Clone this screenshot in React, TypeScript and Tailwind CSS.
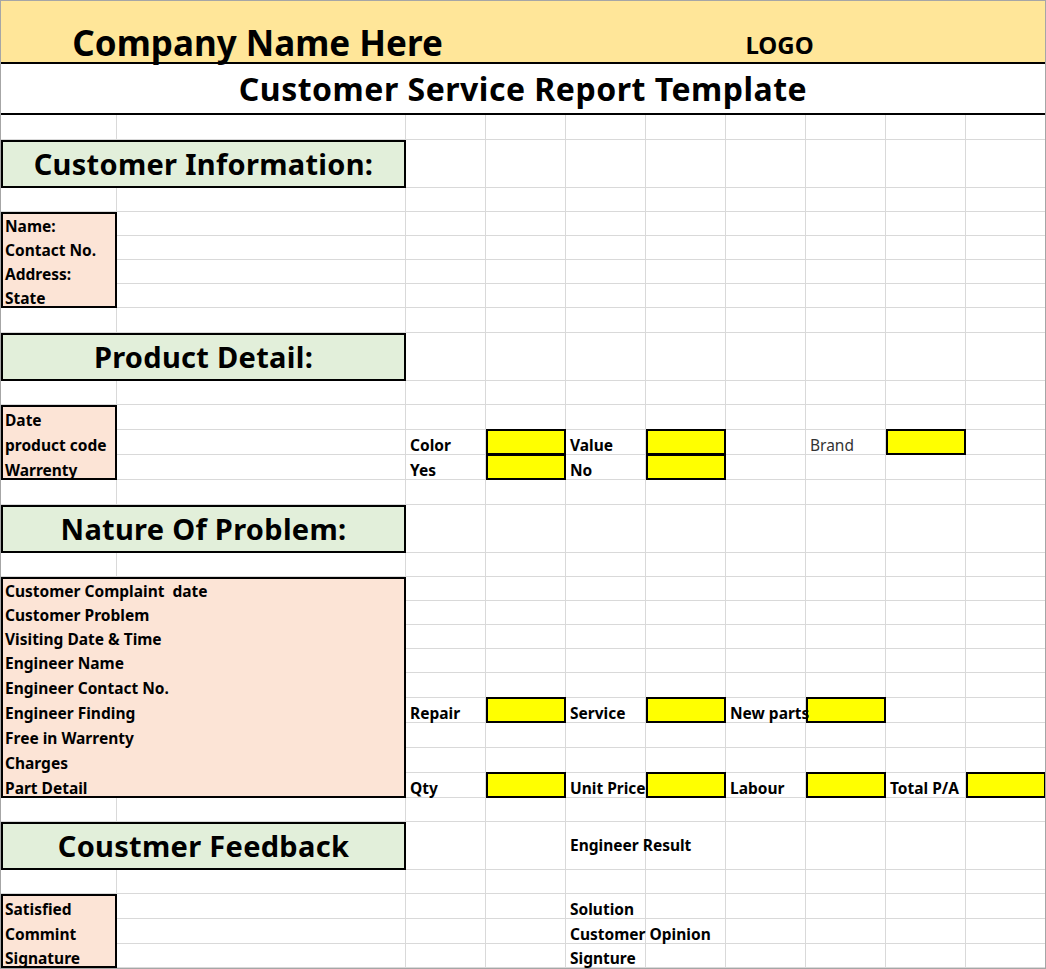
import React from 'react';

const ROWS = [25, 48, 24, 24, 24, 24, 24, 25, 48, 24, 25, 25, 25, 25, 48, 24, 24, 24, 24, 24, 25, 25, 25, 25, 25, 24, 48, 24, 25, 25, 24];
const COLS = 10;

type Item = { r: number; c: number; rs?: number; cs?: number; text?: string; kind: 'label' | 'plain' | 'yellow' | 'head' | 'pink' | 'mid' };

const items: Item[] = [
  { r: 1, c: 0, cs: 2, kind: 'head', text: 'Customer Information:' },
  { r: 3, c: 0, rs: 4, kind: 'pink' },
  { r: 8, c: 0, cs: 2, kind: 'head', text: 'Product Detail:' },
  { r: 10, c: 0, rs: 3, kind: 'pink' },
  { r: 14, c: 0, cs: 2, kind: 'head', text: 'Nature Of Problem:' },
  { r: 16, c: 0, rs: 9, cs: 2, kind: 'pink' },
  { r: 26, c: 0, cs: 2, kind: 'head', text: 'Coustmer Feedback' },
  { r: 28, c: 0, rs: 3, kind: 'pink' },
  ...['Name:', 'Contact No.', 'Address:', 'State'].map((t, i) => ({ r: 3 + i, c: 0, kind: 'label' as const, text: t })),
  ...['Date', 'product code', 'Warrenty'].map((t, i) => ({ r: 10 + i, c: 0, cs: 2, kind: 'label' as const, text: t })),
  ...['Customer Complaint  date', 'Customer Problem', 'Visiting Date & Time', 'Engineer Name', 'Engineer Contact No.', 'Engineer Finding', 'Free in Warrenty', 'Charges', 'Part Detail'].map((t, i) => ({ r: 16 + i, c: 0, cs: 2, kind: 'label' as const, text: t })),
  ...['Satisfied', 'Commint', 'Signature'].map((t, i) => ({ r: 28 + i, c: 0, kind: 'label' as const, text: t })),
  { r: 11, c: 2, kind: 'label', text: 'Color' },
  { r: 11, c: 3, kind: 'yellow' },
  { r: 11, c: 4, kind: 'label', text: 'Value' },
  { r: 11, c: 5, kind: 'yellow' },
  { r: 11, c: 7, kind: 'plain', text: 'Brand' },
  { r: 11, c: 8, kind: 'yellow' },
  { r: 12, c: 2, kind: 'label', text: 'Yes' },
  { r: 12, c: 3, kind: 'yellow' },
  { r: 12, c: 4, kind: 'label', text: 'No' },
  { r: 12, c: 5, kind: 'yellow' },
  { r: 21, c: 2, kind: 'label', text: 'Repair' },
  { r: 21, c: 3, kind: 'yellow' },
  { r: 21, c: 4, kind: 'label', text: 'Service' },
  { r: 21, c: 5, kind: 'yellow' },
  { r: 21, c: 6, kind: 'label', text: 'New parts' },
  { r: 21, c: 7, kind: 'yellow' },
  { r: 24, c: 2, kind: 'label', text: 'Qty' },
  { r: 24, c: 3, kind: 'yellow' },
  { r: 24, c: 4, kind: 'label', text: 'Unit Price' },
  { r: 24, c: 5, kind: 'yellow' },
  { r: 24, c: 6, kind: 'label', text: 'Labour' },
  { r: 24, c: 7, kind: 'yellow' },
  { r: 24, c: 8, kind: 'label', text: 'Total P/A' },
  { r: 24, c: 9, kind: 'yellow' },
  { r: 26, c: 4, cs: 3, kind: 'mid', text: 'Engineer Result' },
  { r: 28, c: 4, cs: 3, kind: 'label', text: 'Solution' },
  { r: 29, c: 4, cs: 3, kind: 'label', text: 'Customer Opinion' },
  { r: 30, c: 4, cs: 3, kind: 'label', text: 'Signture' },
];

// grid placement comes from the cell data above
const pos = (it: { r: number; c: number; rs?: number; cs?: number }) => ({
  gridRow: `${it.r + 1} / span ${it.rs ?? 1}`,
  gridColumn: `${it.c + 1} / span ${it.cs ?? 1}`,
});

export default function App() {
  return (
    <div className="w-[1046px] h-[969px] bg-white overflow-hidden border border-[#a6a6a6] font-['Liberation_Sans',Arial,sans-serif]">
      <div className="h-[63px] bg-[#ffe699] border-b-2 border-black flex items-end pb-[2px]">
        <div className="w-[580px] text-center text-[35px] font-bold text-black leading-none font-['Liberation_Serif',serif]">Company Name Here</div>
        <div className="w-[600px] text-center text-[24px] font-bold text-black leading-none pb-[3px]">LOGO</div>
      </div>
      <div className="h-[51px] border-b-2 border-black flex items-center justify-center text-[32px] font-bold tracking-[0.5px] text-black font-['DejaVu_Sans',sans-serif]">
        Customer Service Report Template
      </div>
      <div className="grid grid-cols-[116px_289px_repeat(8,80px)] grid-rows-[25px_48px_24px_24px_24px_24px_24px_25px_48px_24px_25px_25px_25px_25px_48px_24px_24px_24px_24px_24px_25px_25px_25px_25px_25px_24px_48px_24px_25px_25px_24px]">
        {ROWS.flatMap((_, r) =>
          Array.from({ length: COLS }, (_, c) => (
            <div key={`g-${r}-${c}`} className="border-r border-b border-[#d9d9d9]" style={pos({ r, c })} />
          ))
        )}
        {items.map((it, i) => {
          if (it.kind === 'pink') return <div key={i} className="bg-[#fce4d6] border-2 border-black z-10" style={pos(it)} />;
          if (it.kind === 'yellow') return <div key={i} className="bg-[#ffff00] border-2 border-black z-10 -mt-px" style={pos(it)} />;
          if (it.kind === 'head')
            return (
              <div key={i} className="bg-[#e2efda] border-2 border-black z-10 flex items-center justify-center text-[29px] font-bold text-black tracking-[0.3px] font-['DejaVu_Sans',sans-serif]" style={pos(it)}>
                {it.text}
              </div>
            );
          if (it.kind === 'mid')
            return (
              <div key={i} className="z-20 flex items-center pl-1 text-[15.5px] font-bold text-black leading-none" style={pos(it)}>
                {it.text}
              </div>
            );
          return (
            <div key={i} className={`z-20 flex items-end pb-[2px] pl-1 text-[15.5px] whitespace-pre leading-none ${it.kind === 'label' ? 'font-bold text-black' : 'text-[#333]'}`} style={pos(it)}>
              {it.text}
            </div>
          );
        })}
      </div>
    </div>
  );
}
